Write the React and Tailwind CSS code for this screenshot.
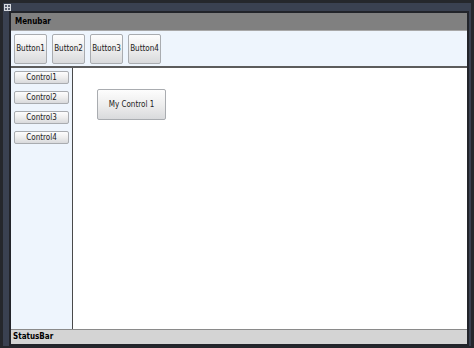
import React from 'react'

const font = { fontFamily: '"DejaVu Sans Condensed", "DejaVu Sans", Verdana, sans-serif' }

function ToolButton({ label, className = '' }) {
  return (
    <button
      className={`flex items-center justify-center border border-[#a9acb0] rounded-[2px] bg-gradient-to-b from-[#fdfdfd] via-[#eeeeee] to-[#d9dadc] text-[8px] text-[#1a1a1a] leading-none ${className}`}
    >
      {label}
    </button>
  )
}

export default function App() {
  const tools = ['Button1', 'Button2', 'Button3', 'Button4']
  const controls = ['Control1', 'Control2', 'Control3', 'Control4']

  return (
    <div className="w-[474px] h-[348px] bg-[#25272c] p-[3px] pb-[2px] overflow-hidden" style={font}>
      <div className="relative h-full bg-[#3a4151] pt-[8px] pl-[6px] pr-[2px]">
        {/* window icon */}
        <div className="absolute left-[1px] top-[1px] w-[7px] h-[7px] bg-[#d8dbe0] grid grid-cols-2 gap-[1px] p-[1px]">
          <span className="bg-[#5a6070]" />
          <span className="bg-[#5a6070]" />
          <span className="bg-[#5a6070]" />
          <span className="bg-[#5a6070]" />
        </div>

        <div className="h-full border-2 border-[#22242a] flex flex-col">
          {/* Menubar */}
          <div className="h-[18px] bg-[#808080] flex items-center pl-[4px] border-b border-[#a8a8a8]">
            <span className="text-[8px] font-bold text-black leading-none">Menubar</span>
          </div>

          {/* Toolbar */}
          <div className="h-[37px] bg-[#eef5fd] border-b-2 border-[#5c5c5c] flex items-start pt-[3px] pl-[3px] gap-[5px]">
            {tools.map((t) => (
              <ToolButton key={t} label={t} className="w-[33px] h-[30px]" />
            ))}
          </div>

          {/* Main */}
          <div className="flex-1 flex min-h-0">
            <div className="w-[62px] bg-[#eef5fd] border-r border-[#4a4a4a] flex flex-col items-start pt-[3px] pl-[3px] gap-[7px]">
              {controls.map((c) => (
                <ToolButton key={c} label={c} className="w-[55px] h-[13px]" />
              ))}
            </div>
            <div className="flex-1 bg-white pt-[21px] pl-[24px]">
              <ToolButton label="My Control 1" className="w-[69px] h-[31px]" />
            </div>
          </div>

          {/* Status bar */}
          <div className="h-[15px] bg-[#d4d4d4] border-t border-[#8a8a8a] flex items-center pl-[2px]">
            <span className="text-[8px] font-bold text-black leading-none">StatusBar</span>
          </div>
        </div>
      </div>
    </div>
  )
}
